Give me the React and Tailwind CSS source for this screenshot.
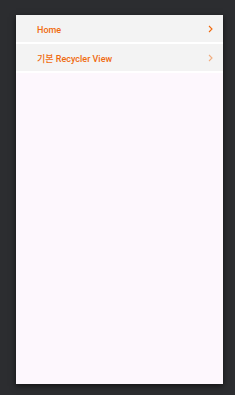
export default function App() {
  const items = [
    { label: "Home", faded: false },
    { label: "기본 Recycler View", faded: true },
  ];

  return (
    <div className="w-[235px] h-[395px] bg-[#2c2d30] pt-[15px] pl-[16px] pr-[12px] pb-[11px]">
      <div
        className="h-full bg-[#fdf7fd] shadow-[0_2px_6px_rgba(0,0,0,0.6)] flex flex-col"
        style={{ fontFamily: "Roboto, 'Noto Sans CJK KR', sans-serif" }}
      >
        {items.map((item) => (
          <div key={item.label} className="bg-white pb-[2px]">
            <div className="h-[27px] bg-[#f3f3f3] flex items-center pl-[21px] pr-[10px]">
              <span className="flex-1 text-[9px] font-medium text-[#f06a0f] leading-[12px] pt-[2px]">
                {item.label}
              </span>
              <svg
                width="5"
                height="8"
                viewBox="0 0 5 8"
                className={item.faded ? "opacity-50" : ""}
              >
                <path d="M1 1 L4 4 L1 7" fill="none" stroke="#f06a0f" strokeWidth="1.1" />
              </svg>
            </div>
          </div>
        ))}
      </div>
    </div>
  );
}
